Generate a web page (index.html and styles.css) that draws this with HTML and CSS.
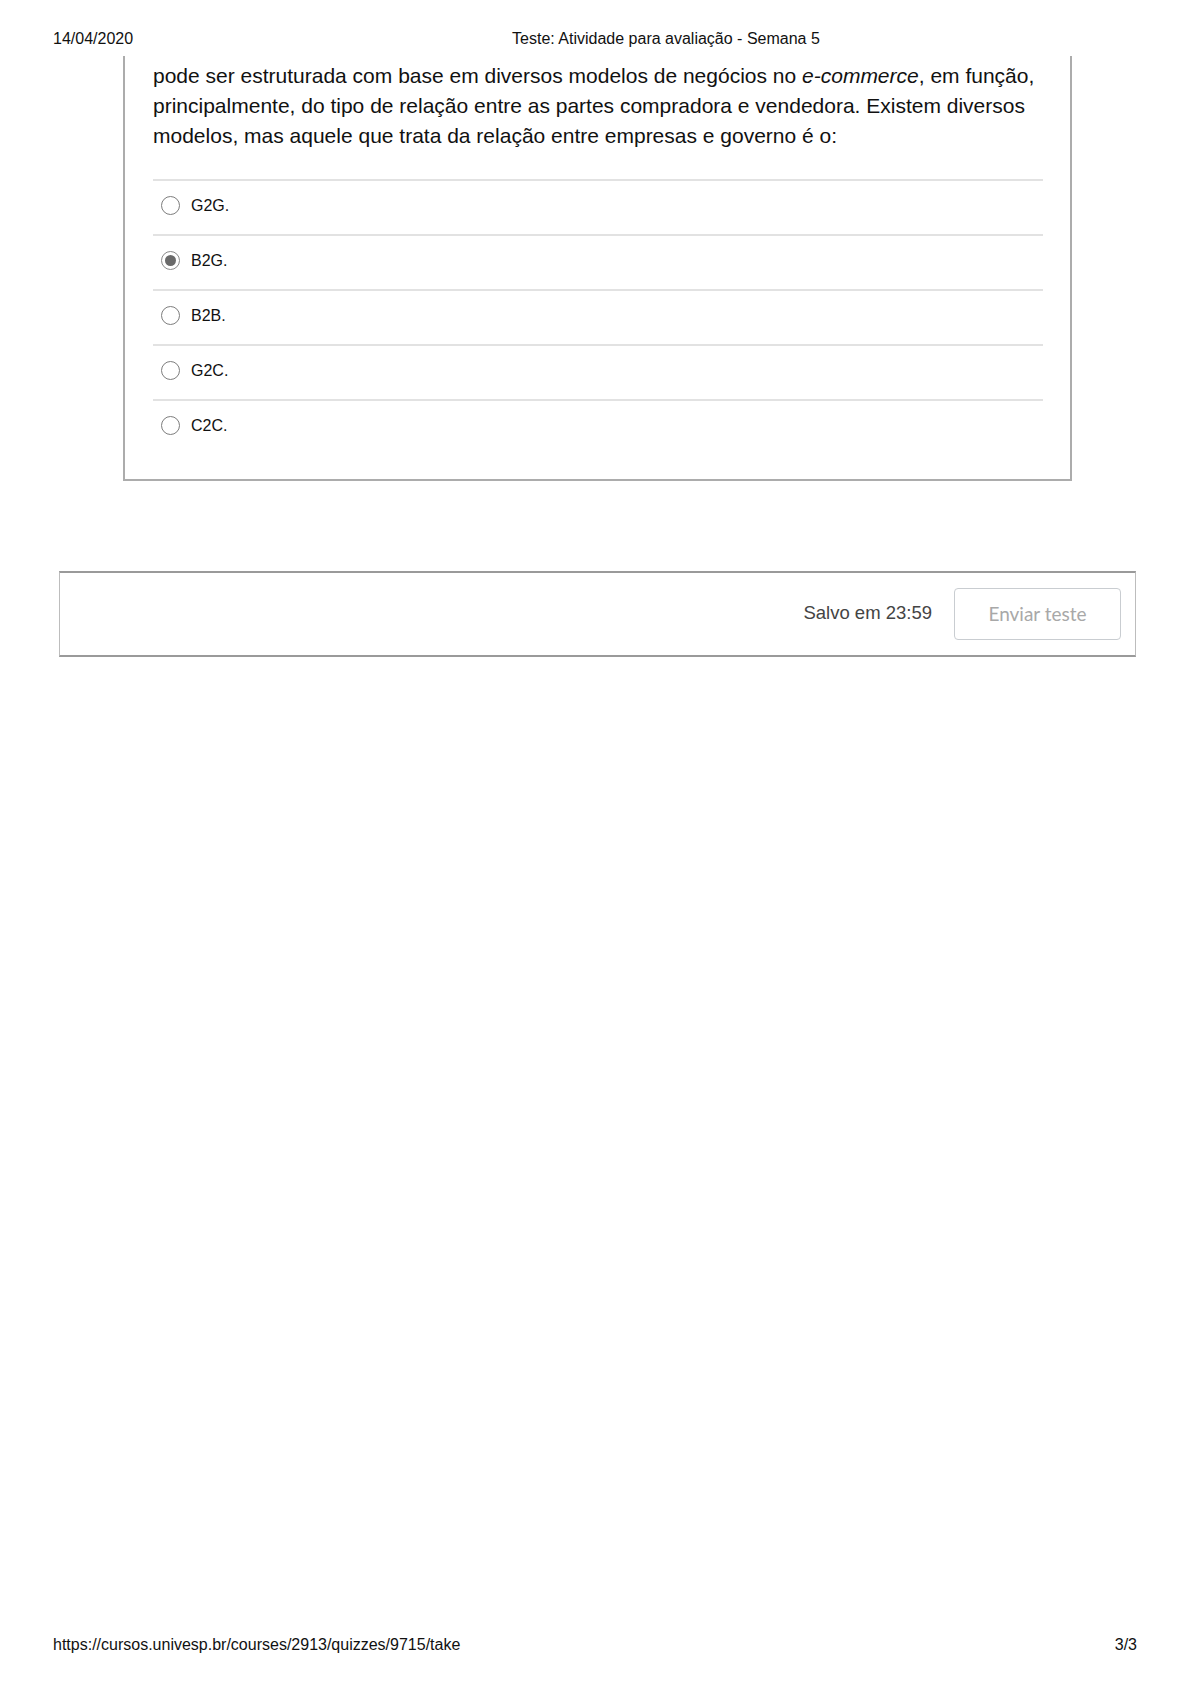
FILE: index.html
```html
<!DOCTYPE html>
<html lang="pt-BR">
<head>
<meta charset="utf-8">
<title>Teste: Atividade para avaliação - Semana 5</title>
<link rel="stylesheet" href="styles.css">
</head>
<body>
<div class="page">
  <header class="print-header">
    <span class="print-date">14/04/2020</span>
    <span class="print-title">Teste: Atividade para avaliação - Semana 5</span>
  </header>

  <section class="question">
    <p class="question-text">pode ser estruturada com base em diversos modelos de negócios no <em>e-commerce</em>, em função,<br>principalmente, do tipo de relação entre as partes compradora e vendedora. Existem diversos<br>modelos, mas aquele que trata da relação entre empresas e governo é o:</p>
    <ul class="answers">
      <li class="answer"><span class="radio"></span><span class="answer-label">G2G.</span></li>
      <li class="answer"><span class="radio checked"></span><span class="answer-label">B2G.</span></li>
      <li class="answer"><span class="radio"></span><span class="answer-label">B2B.</span></li>
      <li class="answer"><span class="radio"></span><span class="answer-label">G2C.</span></li>
      <li class="answer"><span class="radio"></span><span class="answer-label">C2C.</span></li>
    </ul>
  </section>

  <section class="submit-bar">
    <span class="saved">Salvo em 23:59</span>
    <button class="submit-btn" type="button">Enviar teste</button>
  </section>

  <footer class="print-footer">
    <span class="print-url">https://cursos.univesp.br/courses/2913/quizzes/9715/take</span>
    <span class="print-page">3/3</span>
  </footer>
</div>
</body>
</html>
```
FILE: styles.css
```css
html, body {
  margin: 0;
  padding: 0;
  background: #ffffff;
}

body {
  font-family: "Liberation Sans", Arial, sans-serif;
  color: #111;
}

.page {
  width: 1191px;
  height: 1684px;
  display: flex;
  flex-direction: column;
  box-sizing: border-box;
}

.print-header {
  display: flex;
  align-items: center;
  padding: 30px 0 8px 53px;
  height: 18px;
  font-size: 16px;
  line-height: 18px;
  color: #111;
}

.print-title {
  margin-left: 379px;
}

.question {
  margin-left: 123px;
  width: 949px;
  box-sizing: border-box;
  border: 2px solid #acacac;
  border-top: none;
  padding: 5px 27px 25px 28px;
}

.question-text {
  margin: 0;
  font-size: 21px;
  line-height: 30px;
  color: #111;
}

.question-text em {
  font-style: italic;
}

.answers {
  list-style: none;
  margin: 28px 0 0 0;
  padding: 0;
}

.answer {
  display: flex;
  align-items: center;
  height: 55px;
  box-sizing: border-box;
  border-top: 2px solid #e2e2e2;
  padding-left: 8px;
  padding-bottom: 4px;
  font-size: 16px;
  color: #111;
}

.radio {
  width: 19px;
  height: 19px;
  box-sizing: border-box;
  border: 1.6px solid #7d7d7d;
  border-radius: 50%;
  margin-right: 11px;
  display: flex;
  align-items: center;
  justify-content: center;
  flex: none;
}

.radio.checked {
  border-color: #8a8a8a;
}

.radio.checked::after {
  content: "";
  width: 11px;
  height: 11px;
  border-radius: 50%;
  background: #6a6a6a;
}

.submit-bar {
  margin: 90px 0 0 59px;
  width: 1077px;
  height: 86px;
  box-sizing: border-box;
  border-top: 2px solid #9a9a9a;
  border-bottom: 2px solid #9a9a9a;
  border-left: 1px solid #bdbdbd;
  border-right: 1px solid #bdbdbd;
  display: flex;
  align-items: center;
  justify-content: flex-end;
  padding-right: 14px;
}

.saved {
  font-size: 18.5px;
  color: #444;
  margin-right: 22px;
  padding-bottom: 2px;
}

.submit-btn {
  width: 167px;
  height: 52px;
  box-sizing: border-box;
  border: 1px solid #c9cdd1;
  border-radius: 4px;
  background: #ffffff;
  font-family: Lato, "Liberation Sans", sans-serif;
  font-size: 19px;
  color: #a8a8a8;
  padding: 0 0 2px 0;
}

.print-footer {
  margin-top: auto;
  display: flex;
  justify-content: space-between;
  padding: 0 54px 30px 53px;
  font-size: 16px;
  line-height: 18px;
  color: #111;
}
```
